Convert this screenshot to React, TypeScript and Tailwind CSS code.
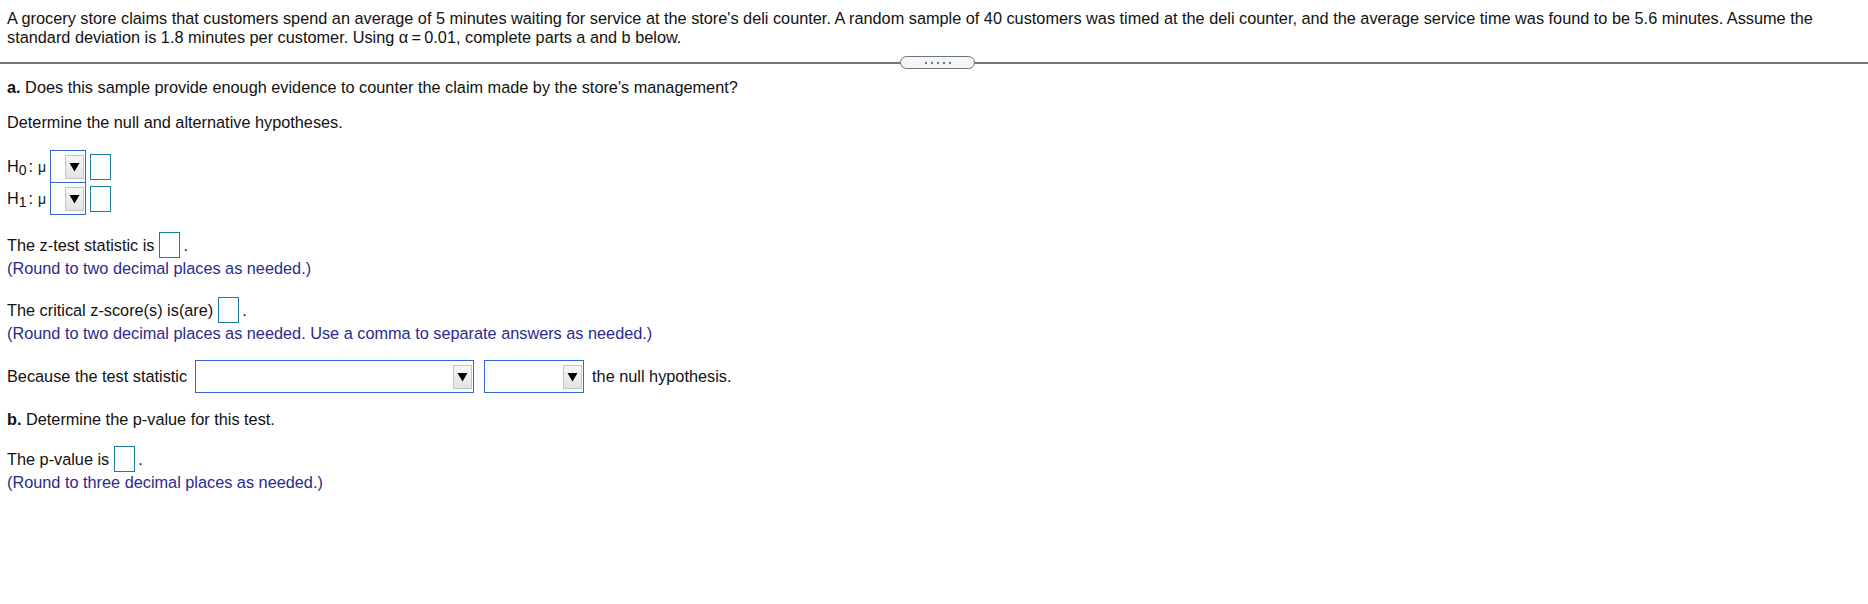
import React from "react";

function AnswerBox() {
  return <span className="inline-block h-[26px] w-[21px] border border-[#1b7f99] bg-white" />;
}

function Select({ width }: { width: string }) {
  return (
    <div className={`relative flex h-[33px] items-center justify-end border border-[#3567cc] bg-white pr-[1px] ${width}`}>
      <div className="flex h-[24px] w-[19px] items-center justify-center border border-[#c4c4c4] bg-gradient-to-b from-[#f7f7f7] to-[#e3e3e3]">
        <svg width="11" height="10" viewBox="0 0 11 10">
          <path d="M0.5 1 L10.5 1 L5.5 9.5 Z" fill="#000" />
        </svg>
      </div>
    </div>
  );
}

function HypothesisRow({ sub, first }: { sub: string; first?: boolean }) {
  return (
    <div className={`flex h-[33px] items-center ${first ? "" : "-mt-px"}`}>
      <span className="w-[43px] leading-[19px]">
        H<sub className="relative top-[3px] align-baseline text-[14px]">{sub}</sub>
        <span className="ml-[2px]">:</span>
        <span className="ml-[5px] text-[14px]">μ</span>
      </span>
      <Select width="w-[36px]" />
      <span className="ml-[4px] flex items-center">
        <AnswerBox />
      </span>
    </div>
  );
}

export default function App() {
  const hint = "text-[#2a2a8f]";
  return (
    <div className="min-h-[604px] bg-white font-['Liberation_Sans',Arial,sans-serif] text-[16.3px] leading-[19px] text-[#111]">
      <p className="pl-[7px] pr-[20px] pt-[9px]">
        A grocery store claims that customers spend an average of 5 minutes waiting for service at the store's deli
        counter. A random sample of 40 customers was timed at the deli counter, and the average service time was found
        to be 5.6 minutes. Assume the standard deviation is 1.8 minutes per customer. Using α&thinsp;=&thinsp;0.01,
        complete parts a and b below.
      </p>

      <div className="relative mt-[15px] h-[2px] bg-[#6f7984]">
        <div className="absolute left-[900px] top-[-6px] flex h-[13px] w-[75px] items-center justify-center gap-[4px] rounded-full border border-[#6b7580] bg-[#f4f5f7]">
          <span className="h-[2px] w-[2px] bg-[#6b7580]" />
          <span className="h-[2px] w-[2px] bg-[#6b7580]" />
          <span className="h-[2px] w-[2px] bg-[#6b7580]" />
          <span className="h-[2px] w-[2px] bg-[#6b7580]" />
          <span className="h-[2px] w-[2px] bg-[#6b7580]" />
        </div>
      </div>

      <div className="pl-[7px]">
        <p className="mt-[14px]">
          <b>a.</b> Does this sample provide enough evidence to counter the claim made by the store's management?
        </p>
        <p className="mt-[16px]">Determine the null and alternative hypotheses.</p>

        <div className="mt-[18px]">
          <HypothesisRow sub="0" first />
          <HypothesisRow sub="1" />
        </div>

        <div className="mt-[17px] flex h-[26px] items-center">
          <span>The z-test statistic is</span>
          <span className="ml-[5px] flex">
            <AnswerBox />
          </span>
          <span className="ml-[3px]">.</span>
        </div>
        <p className={`mt-[1px] ${hint}`}>(Round to two decimal places as needed.)</p>

        <div className="mt-[19px] flex h-[26px] items-center">
          <span>The critical z-score(s) is(are)</span>
          <span className="ml-[5px] flex">
            <AnswerBox />
          </span>
          <span className="ml-[3px]">.</span>
        </div>
        <p className={`mt-[1px] ${hint}`}>
          (Round to two decimal places as needed. Use a comma to separate answers as needed.)
        </p>

        <div className="mt-[17px] flex h-[33px] items-center">
          <span>Because the test statistic</span>
          <span className="ml-[8px]">
            <Select width="w-[279px]" />
          </span>
          <span className="ml-[10px]">
            <Select width="w-[100px]" />
          </span>
          <span className="ml-[8px]">the null hypothesis.</span>
        </div>

        <p className="mt-[17px]">
          <b>b.</b> Determine the p-value for this test.
        </p>

        <div className="mt-[17px] flex h-[26px] items-center">
          <span>The p-value is</span>
          <span className="ml-[5px] flex">
            <AnswerBox />
          </span>
          <span className="ml-[3px]">.</span>
        </div>
        <p className={`mt-[1px] ${hint}`}>(Round to three decimal places as needed.)</p>
      </div>
    </div>
  );
}
